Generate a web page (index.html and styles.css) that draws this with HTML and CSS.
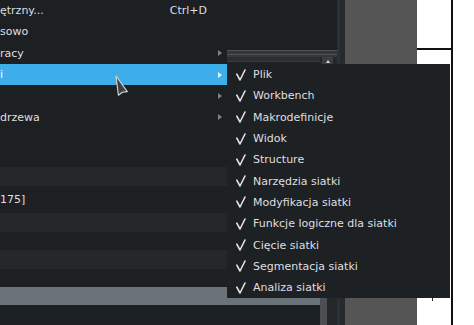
FILE: index.html
```html
<!DOCTYPE html>
<html lang="pl">
<head>
<meta charset="utf-8">
<title>Menu</title>
<link rel="stylesheet" href="styles.css">
</head>
<body>
<div class="screen">
  <div class="panel">
    <div class="panel-top"></div>
    <div class="splitter"><div class="line"></div><div class="line"></div></div>
    <div class="tree">
      <div class="rows">
        <div class="header"></div>
        <div class="spacer"></div>
        <div class="row alt"></div>
        <div class="row tall"><span class="cell">175]</span></div>
        <div class="row alt"></div>
        <div class="row"></div>
        <div class="row alt"></div>
        <div class="row"></div>
        <div class="row sel"></div>
        <div class="row"></div>
      </div>
      <div class="vscroll">
        <div class="sbtn"><span class="up"></span></div>
        <div class="track"></div>
        <div class="slider"></div>
      </div>
    </div>
  </div>
  <div class="sep"><div class="sep-a"></div><div class="sep-b"></div></div>
  <div class="gray"></div>
  <div class="paper">
    <div class="sheet">
      <div class="sheet-top"></div>
      <div class="sheet-body"><span class="tick"></span></div>
    </div>
  </div>
</div>

<div class="menu">
  <div class="mi"><span class="t">ętrzny...</span><span class="sc">Ctrl+D</span></div>
  <div class="mi"><span class="t">sowo</span></div>
  <div class="mi"><span class="t">racy</span><span class="arr"></span></div>
  <div class="mi active"><span class="t">i</span><span class="arr"></span></div>
  <div class="mi"><span class="t"></span><span class="arr"></span></div>
  <div class="mi"><span class="t">drzewa</span><span class="arr"></span></div>
  <div class="mi"></div>
</div>

<div class="submenu">
  <div class="si"><svg class="chk" viewBox="0 0 10 12"><polyline points="0.8,5.2 4,11 9,1"/></svg><span>Plik</span></div>
  <div class="si"><svg class="chk" viewBox="0 0 10 12"><polyline points="0.8,5.2 4,11 9,1"/></svg><span>Workbench</span></div>
  <div class="si"><svg class="chk" viewBox="0 0 10 12"><polyline points="0.8,5.2 4,11 9,1"/></svg><span>Makrodefinicje</span></div>
  <div class="si"><svg class="chk" viewBox="0 0 10 12"><polyline points="0.8,5.2 4,11 9,1"/></svg><span>Widok</span></div>
  <div class="si"><svg class="chk" viewBox="0 0 10 12"><polyline points="0.8,5.2 4,11 9,1"/></svg><span>Structure</span></div>
  <div class="si"><svg class="chk" viewBox="0 0 10 12"><polyline points="0.8,5.2 4,11 9,1"/></svg><span>Narzędzia siatki</span></div>
  <div class="si"><svg class="chk" viewBox="0 0 10 12"><polyline points="0.8,5.2 4,11 9,1"/></svg><span>Modyfikacja siatki</span></div>
  <div class="si"><svg class="chk" viewBox="0 0 10 12"><polyline points="0.8,5.2 4,11 9,1"/></svg><span>Funkcje logiczne dla siatki</span></div>
  <div class="si"><svg class="chk" viewBox="0 0 10 12"><polyline points="0.8,5.2 4,11 9,1"/></svg><span>Cięcie siatki</span></div>
  <div class="si"><svg class="chk" viewBox="0 0 10 12"><polyline points="0.8,5.2 4,11 9,1"/></svg><span>Segmentacja siatki</span></div>
  <div class="si"><svg class="chk" viewBox="0 0 10 12"><polyline points="0.8,5.2 4,11 9,1"/></svg><span>Analiza siatki</span></div>
</div>

<svg class="cursor" viewBox="0 0 14 22" width="14" height="22"><path d="M1 1 L12.3 16.6 L7.4 17.2 L3.4 20.2 Z"/></svg>
</body>
</html>
```
FILE: styles.css
```css
* { box-sizing: border-box; }
html, body {
  margin: 0;
  padding: 0;
  width: 474px;
  height: 325px;
  overflow: hidden;
  background: #1d2023;
  font-family: "DejaVu Sans", "Liberation Sans", sans-serif;
  font-size: 11px;
  color: #dedfe1;
}
.screen {
  display: grid;
  grid-template-columns: 337px 8px 72px 1fr;
  height: 325px;
}
.panel {
  display: flex;
  flex-direction: column;
  background: #1d2023;
}
.panel-top { height: 50px; }
.splitter {
  height: 7px;
  background: #35383b;
  display: flex;
  flex-direction: column;
  gap: 3px;
}
.splitter .line { height: 1px; background: #505356; }
.tree {
  flex: 1;
  display: grid;
  grid-template-columns: 320px 17px;
}
.rows { display: flex; flex-direction: column; }
.header { height: 5px; background: #2c2f32; border-bottom: 1px solid #3a3d40; }
.spacer { height: 105px; }
.row { height: 18px; background: #1d2023; display: flex; align-items: center; }
.row.alt { height: 19px; background: #25282b; }
.row.tall { height: 27px; }
.row.sel { height: 18px; background: #6a727a; }
.row:last-child { flex: 1; }
.cell { padding-left: 0; }
.vscroll {
  display: flex;
  flex-direction: column;
  background: #24272a;
}
.sbtn {
  height: 8px;
  width: 11px;
  margin-left: 2px;
  background: #3b3e41;
  display: flex;
  justify-content: center;
  align-items: center;
}
.up {
  width: 0; height: 0;
  border-left: 2.5px solid transparent;
  border-right: 2.5px solid transparent;
  border-bottom: 3px solid #d8d8d8;
}
.track { flex: 1; }
.slider { height: 27px; width: 7px; background: #4c4f52; }
.sep { display: grid; grid-template-columns: 3px 5px; }
.sep-a { background: #2e3134; }
.sep-b { background: #27292c; }
.gray { background: #555555; }
.paper { background: #ffffff; }
.sheet {
  width: 36px;
  height: 325px;
  border-right: 2px solid #111;
  display: flex;
  flex-direction: column;
}
.sheet-top { height: 50px; border-bottom: 2px solid #111; }
.sheet-body { flex: 1; position: relative; }
.tick {
  position: absolute;
  left: 15px;
  top: 246px;
  width: 1px;
  height: 5px;
  background: #222;
}

/* main context menu */
.menu {
  position: absolute;
  left: 0;
  top: 0;
  width: 227px;
  background: #1d2023;
}
.mi {
  height: 21.3px;
  display: flex;
  align-items: center;
  padding-right: 5px;
}
.mi .t { flex: 1; white-space: nowrap; }
.mi .sc { margin-right: 15px; }
.arr {
  width: 0; height: 0;
  border-top: 3.5px solid transparent;
  border-bottom: 3.5px solid transparent;
  border-left: 4px solid #7e8184;
  margin-left: 2px;
}
.mi.active { background: #3daee9; color: #fcfcfc; }
.mi.active .arr { border-left-color: #e8f4fb; }

/* submenu */
.submenu {
  position: absolute;
  left: 227px;
  top: 64px;
  width: 223px;
  background: #1e2124;
}
.si {
  height: 21.3px;
  display: flex;
  align-items: center;
  padding-left: 9px;
  gap: 7px;
  white-space: nowrap;
}
.chk {
  width: 10px;
  height: 12px;
  fill: none;
  stroke: #e2e3e4;
  stroke-width: 1.6;
  stroke-linecap: round;
  stroke-linejoin: round;
}

.cursor {
  position: absolute;
  left: 115px;
  top: 75px;
}
.cursor path {
  fill: #3e3f41;
  stroke: #d8d8d8;
  stroke-width: 1.1;
  stroke-linejoin: round;
}
```
